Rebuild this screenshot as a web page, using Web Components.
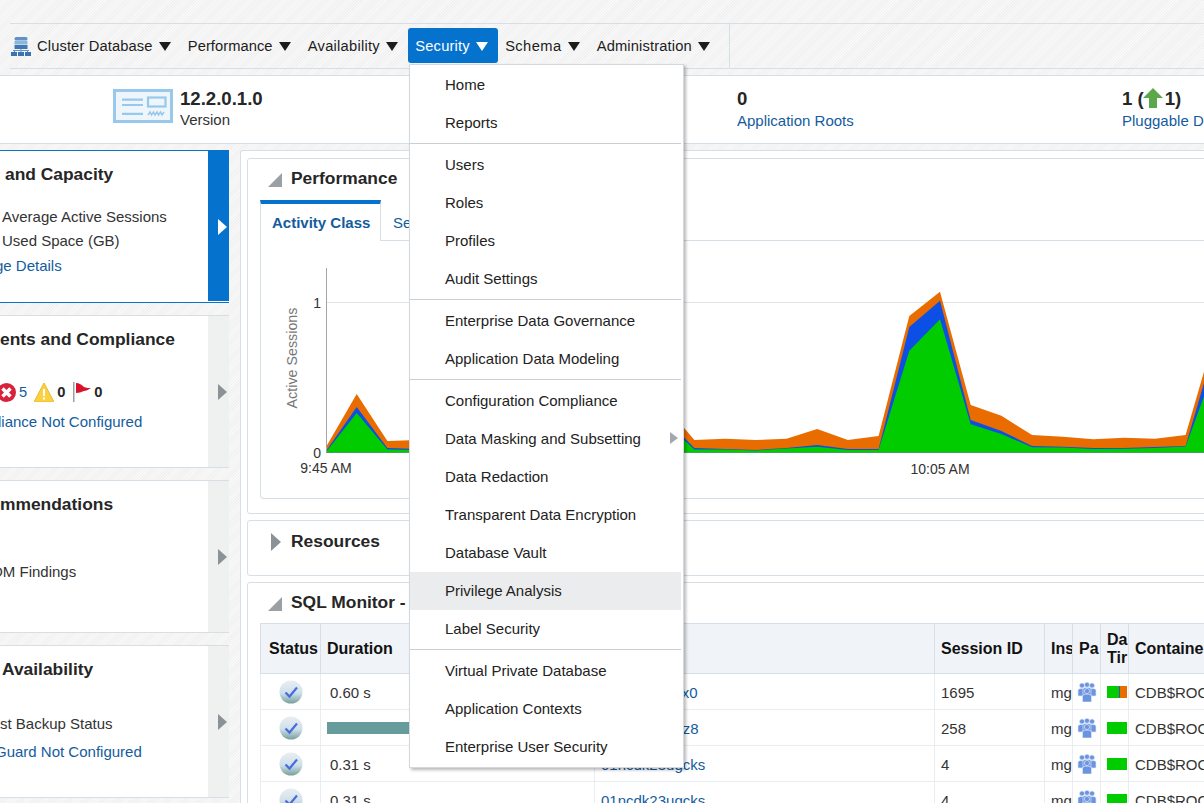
<!DOCTYPE html>
<html>
<head>
<meta charset="utf-8">
<title>Cluster Database</title>
<style>
html, body { margin: 0; height: 803px; overflow: hidden; }
body {
  font: 15px "Liberation Sans", Arial, sans-serif;
  color: #333;
  background: repeating-linear-gradient(135deg, #f8f8f8 0 1px, #f1f1f1 1px 2px);
}
x-app { display: block; }
</style>
</head>
<body>
<x-app>
  <x-navbar>
    <x-nav-item icon spacing=".13">Cluster Database</x-nav-item>
    <x-nav-item spacing=".05">Performance</x-nav-item>
    <x-nav-item spacing=".25">Availability</x-nav-item>
    <x-nav-item active spacing=".2">Security</x-nav-item>
    <x-nav-item spacing=".4">Schema</x-nav-item>
    <x-nav-item spacing=".14">Administration</x-nav-item>
  </x-navbar>

  <x-summary>
    <x-summary-item icon="version" value="12.2.0.1.0" label="Version"></x-summary-item>
    <x-summary-item value="0" label="Application Roots" link></x-summary-item>
    <x-summary-item value="1 (|1)" label="Pluggable Databases" link></x-summary-item>
  </x-summary>

  <x-main>
    <x-side-card slot="side" heading="and Capacity" inset="5" active>
      <x-side-line top="20" at="2">Average Active Sessions</x-side-line>
      <x-side-line at="2">Used Space (GB)</x-side-line>
      <x-side-line top="1" at="-5" link>ge Details</x-side-line>
    </x-side-card>
    <x-side-card slot="side" heading="ents and Compliance" inset="0">
      <x-status-row></x-status-row>
      <x-side-line top="6" at="-2" link>liance Not Configured</x-side-line>
    </x-side-card>
    <x-side-card slot="side" heading="mmendations" inset="0">
      <x-side-line top="45" at="-8">DM Findings</x-side-line>
    </x-side-card>
    <x-side-card slot="side" heading="Availability" inset="2">
      <x-side-line top="32" at="0">st Backup Status</x-side-line>
      <x-side-line top="4" at="-5" link>Guard Not Configured</x-side-line>
    </x-side-card>

    <x-panel heading="Performance" height="356">
      <x-tabs>
        <x-chart></x-chart>
      </x-tabs>
    </x-panel>
    <x-panel heading="Resources" height="56" closed></x-panel>
    <x-panel heading="SQL Monitor -" height="240">
      <x-sql-table></x-sql-table>
    </x-panel>
  </x-main>

  <x-menu groups='[
    ["Home","Reports"],
    ["Users","Roles","Profiles","Audit Settings"],
    ["Enterprise Data Governance","Application Data Modeling"],
    ["Configuration Compliance","Data Masking and Subsetting>","Data Redaction","Transparent Data Encryption","Database Vault","Privilege Analysis*","Label Security"],
    ["Virtual Private Database","Application Contexts","Enterprise User Security"]
  ]'></x-menu>
</x-app>

<script>
const LINE = '#d6dfe6';
const LINK = '#145c9e';

class App extends HTMLElement {
  constructor() {
    super();
    this.attachShadow({ mode: 'open' });
    this.shadowRoot.innerHTML = `
      <style>
      :host { display: block; position: relative; height: 803px; overflow: hidden; padding-top: 23px; box-sizing: border-box; }
      </style>
      <slot></slot>`;
  }
}

class Navbar extends HTMLElement {
  constructor() {
    super();
    this.attachShadow({ mode: 'open' });
    this.shadowRoot.innerHTML = `
      <style>
      :host {
        display: block;
        margin-left: 10px;
        border-top: 1px solid ${LINE};
        border-bottom: 1px solid ${LINE};
      }
      .row { display: flex; align-items: center; height: 44px; padding-left: 1px; }
      .end { width: 9px; height: 100%; border-right: 1px solid ${LINE}; }
      </style>
      <div class="row"><slot></slot><div class="end"></div></div>`;
  }
}

class NavItem extends HTMLElement {
  constructor() {
    super();
    this.attachShadow({ mode: 'open' });
    const active = this.hasAttribute('active');
    const icon = this.hasAttribute('icon') ? `
      <svg width="20" height="20" viewBox="0 0 20 20" style="margin:0 6px 0 -7px;flex:none">
        <rect x="3.5" y="1" width="13" height="3.5" rx="1.5" fill="#5f93c7"/>
        <rect x="3.5" y="5" width="13" height="3.5" fill="#8db6de"/>
        <rect x="3.5" y="9" width="13" height="4" fill="#3f78b5"/>
        <path d="M2 14.5h16M3.5 14.5v1.5M10 13v3M16.500 14.500v1.500" stroke="#5f93c7" fill="none"/>
        <rect x="0" y="16" width="6" height="4.500" fill="#3b73b0"/>
        <rect x="7" y="16" width="6" height="4.500" fill="#3b73b0"/>
        <rect x="14" y="16" width="6" height="4.500" fill="#3b73b0"/>
      </svg>` : '';
    this.shadowRoot.innerHTML = `
      <style>
      :host {
        display: flex;
        align-items: center;
        height: 35px;
        padding: 0 10px 0 7px;
        margin-top: -1px;
        white-space: nowrap;
        font-size: 14.7px;
        letter-spacing: ${this.getAttribute('spacing') || 0}px;
        color: ${active ? '#fff' : '#1c1c1c'};
        background: ${active ? '#0572ce' : 'none'};
        border-radius: 3px;
      }
      .caret {
        width: 0; height: 0;
        margin: 2px 0 0 6.3px;
        border-left: 6px solid transparent;
        border-right: 6px solid transparent;
        border-top: 9px solid currentColor;
      }
      </style>
      ${icon}<slot></slot><span class="caret"></span>`;
  }
}

class Summary extends HTMLElement {
  constructor() {
    super();
    this.attachShadow({ mode: 'open' });
    this.shadowRoot.innerHTML = `
      <style>
      :host {
        display: block;
        margin-top: 6px;
        height: 67px;
        background: #fff;
        border-top: 1px solid ${LINE};
        border-bottom: 1px solid ${LINE};
        overflow: hidden;
      }
      .grid { display: grid; grid-template-columns: 624px 385px 200px; margin-left: 113px; padding-top: 12px; }
      </style>
      <div class="grid"><slot></slot></div>`;
  }
}

class SummaryItem extends HTMLElement {
  constructor() {
    super();
    this.attachShadow({ mode: 'open' });
    const isVersion = this.getAttribute('icon') === 'version';
    const link = this.hasAttribute('link');
    const icon = isVersion ? `
      <svg width="60" height="34" viewBox="0 0 60 34" style="margin:1px 7px 0 0;flex:none">
        <rect x="1.500" y="1.500" width="57" height="31" fill="#eef6fc" stroke="#98c8ec" stroke-width="3"/>
        <path d="M9 10.700h21M9 16h21M9 24.800h21" stroke="#98c8ec" stroke-width="2.200"/>
        <rect x="35" y="8.500" width="17.500" height="9" fill="none" stroke="#98c8ec" stroke-width="2.200"/>
        <path d="M35 26l2-3 1.500 3 2-3 1.500 3 2-3 1.500 3 2-3 1.500 3 2-3" fill="none" stroke="#98c8ec" stroke-width="1.500"/>
      </svg>` : '';
    const arrow = `<svg width="20" height="20" viewBox="0 0 20 20" style="vertical-align:-3px;margin:0 2px 0 -1px"><path d="M10 0L20 10H14V20H6V10H0Z" fill="#5ba84a"/></svg>`;
    const value = this.getAttribute('value').replace('|', arrow);
    this.shadowRoot.innerHTML = `
      <style>
      :host { display: flex; align-items: flex-start; white-space: nowrap; min-width: 0; }
      .value { font-weight: bold; font-size: 18.600px; line-height: 21px; color: #262626; display: block; }
      .label { display: block; line-height: 20px; margin-top: ${link ? 2 : 1}px; color: ${link ? LINK : '#333'}; }
      </style>
      ${icon}<div><span class="value">${value}</span><span class="label">${this.getAttribute('label')}</span></div>`;
  }
}

class Main extends HTMLElement {
  constructor() {
    super();
    this.attachShadow({ mode: 'open' });
    this.shadowRoot.innerHTML = `
      <style>
      :host { display: grid; grid-template-columns: 229px 1fr; column-gap: 11px; margin-top: 6px; }
      .side { display: flex; flex-direction: column; gap: 12px; }
      .content {
        background: #fff;
        border: 1px solid ${LINE};
        border-right: 0;
        border-radius: 3px 0 0 0;
        padding: 7px 0 0 6px;
        height: 660px;
        overflow: hidden;
      }
      .content ::slotted(*) { margin-bottom: 6px; }
      </style>
      <div class="side"><slot name="side"></slot></div>
      <div class="content"><slot></slot></div>`;
  }
}

class SideCard extends HTMLElement {
  constructor() {
    super();
    this.attachShadow({ mode: 'open' });
    const active = this.hasAttribute('active');
    const edge = active ? '#0572ce' : LINE;
    this.shadowRoot.innerHTML = `
      <style>
      :host {
        display: grid;
        grid-template-columns: 208px 21px;
        height: 153px;
        box-sizing: border-box;
        background: #fff;
        border-top: 1px solid ${edge};
        border-bottom: 1px solid ${edge};
      }
      .body { overflow: hidden; white-space: nowrap; padding-top: 12px; }
      h2 {
        margin: 0;
        font-size: 17.400px;
        line-height: 22px;
        color: #262626;
        padding-left: ${this.getAttribute('inset')}px;
      }
      .band {
        background: ${active ? '#0572ce' : '#eff1f1'};
        ${active ? 'margin-bottom: 1px;' : ''}
        padding: 68px 0 0 10px;
      }
      .arrow {
        width: 0; height: 0;
        border-top: 8px solid transparent;
        border-bottom: 8px solid transparent;
        border-left: 9px solid ${active ? '#fff' : '#8a9297'};
      }
      </style>
      <div class="body"><h2>${this.getAttribute('heading')}</h2><slot></slot></div>
      <div class="band"><div class="arrow"></div></div>`;
  }
}

class SideLine extends HTMLElement {
  constructor() {
    super();
    this.attachShadow({ mode: 'open' });
    this.shadowRoot.innerHTML = `
      <style>
      :host {
        display: block;
        line-height: 24px;
        margin-top: ${this.getAttribute('top') || 0}px;
        margin-left: ${this.getAttribute('at') || 0}px;
        color: ${this.hasAttribute('link') ? LINK : '#333'};
      }
      </style>
      <slot></slot>`;
  }
}

class StatusRow extends HTMLElement {
  constructor() {
    super();
    this.attachShadow({ mode: 'open' });
    this.shadowRoot.innerHTML = `
      <style>
      :host { display: flex; align-items: center; height: 24px; margin: 30px 0 0 -3px; }
      svg { flex: none; }
      b { color: #262626; font-size: 14.700px; }
      .count { color: ${LINK}; margin: 0 7px 0 3px; font-size: 14.700px; }
      </style>
      <svg width="19" height="19" viewBox="0 0 19 19"><circle cx="9.500" cy="9.500" r="9.500" fill="#d8213a"/><path d="M5.500 5.500l8 8M13.500 5.500l-8 8" stroke="#fff" stroke-width="3.500"/></svg>
      <span class="count">5</span>
      <svg width="20" height="20" viewBox="0 0 20 20" style="margin-right:3px"><path d="M10 1L20 20H0Z" fill="#f9d141" stroke="#e8b92e"/><path d="M10 7v7M10 15.500v2" stroke="#fff" stroke-width="2"/></svg>
      <b>0</b>
      <svg width="20" height="20" viewBox="0 0 20 20" style="margin:0 1px 0 8px"><rect x="0" y="0" width="1.500" height="20" fill="#9aa0a6"/><path d="M3 1C6 1 9 3 11 5C13 6 16 6 18 6C15 8 13 9 11 9C8 10 6 11 3 11Z" fill="#d8122a"/></svg>
      <b>0</b>`;
  }
}

class Panel extends HTMLElement {
  constructor() {
    super();
    this.attachShadow({ mode: 'open' });
    const closed = this.hasAttribute('closed');
    const mark = closed
      ? `<svg width="10" height="18" viewBox="0 0 10 18" style="margin-left:23px"><path d="M0 0L10 9L0 18Z" fill="#8a9297"/></svg>`
      : `<svg width="14" height="14" viewBox="0 0 14 14" style="margin-left:20px;margin-top:2px"><path d="M14 0V14H0Z" fill="#9aa0a4"/></svg>`;
    this.shadowRoot.innerHTML = `
      <style>
      :host {
        display: block;
        box-sizing: border-box;
        width: 1100px;
        height: ${this.getAttribute('height')}px;
        border: 1px solid ${LINE};
        border-radius: 3px;
        overflow: hidden;
      }
      header { display: flex; align-items: center; height: ${closed ? 41 : 39}px; }
      h2 { margin: 0 0 0 ${closed ? 10 : 9}px; font-size: 17.400px; color: #262626; white-space: nowrap; }
      .body { padding: 2px 0 0 12px; }
      </style>
      <header>${mark}<h2>${this.getAttribute('heading')}</h2></header>
      <div class="body"><slot></slot></div>`;
  }
}

class Tabs extends HTMLElement {
  constructor() {
    super();
    this.attachShadow({ mode: 'open' });
    this.shadowRoot.innerHTML = `
      <style>
      :host { display: block; }
      .bar { display: flex; height: 41px; box-sizing: border-box; }
      .tab {
        box-sizing: border-box;
        width: 121px;
        padding: 10px 0 0 11px;
        border: 1px solid ${LINE};
        border-top: 4px solid #0572ce;
        border-bottom: 0;
        font-weight: bold;
        color: ${LINK};
      }
      .rest { flex: 1; padding: 14px 0 0 12px; color: ${LINK}; border-bottom: 1px solid ${LINE}; }
      .box {
        height: 257px;
        border: 1px solid ${LINE};
        border-top: 0;
        border-radius: 0 0 0 4px;
        overflow: hidden;
      }
      </style>
      <div class="bar"><div class="tab">Activity Class</div><div class="rest">Services</div></div>
      <div class="box"><slot></slot></div>`;
  }
}

class Chart extends HTMLElement {
  constructor() {
    super();
    this.attachShadow({ mode: 'open' });
    const step = 30.7, x0 = 326, base = 452.5;
    const orange = [447,394,441,440,440,440,440,438,436,434,430,404,440,438.7,440,438.7,429,440,436,316,291.7,405,415.7,435,436.7,439.3,437.7,438.7,435,329.5];
    const blue =   [451,407,448,449,449,449,449,448,447,446,442,417,448,449,450,448,445,449,449,327,300.7,420,431,446,446.7,448,448,447,446,341];
    const green =  [452,413,449.5,450,450,450,450,449,448,447,444,421,449.5,449.5,450.5,448.5,446.7,450,450,350.7,319.3,424.3,434,447.3,447.5,449,448.7,448,446.5,363];
    const area = (tops, fill) => {
      const pts = tops.map((y, i) => `${(x0 + i * step).toFixed(1)},${y}`).join(' ');
      const end = (x0 + (tops.length - 1) * step).toFixed(1);
      return `<polygon points="${x0},${base} ${pts} ${end},${base}" fill="${fill}"/>`;
    };
    this.shadowRoot.innerHTML = `
      <style>
      :host { display: block; }
      svg { display: block; }
      text { font: 14px "Liberation Sans", Arial, sans-serif; fill: #333; }
      </style>
      <svg width="1000" height="257" viewBox="261 241 1000 257">
        <line x1="326" y1="302.500" x2="1261" y2="302.500" stroke="#e1e5ea"/>
        ${area(orange, '#e86c00')}
        ${area(blue, '#0b4fe6')}
        ${area(green, '#00cc00')}
        <line x1="326.500" y1="268" x2="326.500" y2="452.500" stroke="#a5a5a5"/>
        <text x="321" y="308" text-anchor="end">1</text>
        <text x="321" y="458" text-anchor="end">0</text>
        <text x="326" y="473" text-anchor="middle">9:45 AM</text>
        <text x="940" y="474" text-anchor="middle">10:05 AM</text>
        <text transform="translate(297 358) rotate(-90)" text-anchor="middle" style="fill:#777;font-size:14.300px">Active Sessions</text>
      </svg>`;
  }
}

class SqlTable extends HTMLElement {
  constructor() {
    super();
    this.attachShadow({ mode: 'open' });
    const check = `<svg width="24" height="24" viewBox="0 0 24 24">
      <defs><linearGradient id="g" x1="0" y1="0" x2="0" y2="1"><stop offset="0" stop-color="#e9eef2"/><stop offset=".55" stop-color="#cfe0ea"/><stop offset="1" stop-color="#78a09c"/></linearGradient></defs>
      <circle cx="12" cy="12" r="11.500" fill="url(#g)"/><path d="M6.500 12.500l4 4L18 7.500" fill="none" stroke="#4a6be0" stroke-width="2.200"/></svg>`;
    const people = `<svg width="20" height="20" viewBox="0 0 20 20">
      <g fill="#6b94e0" stroke="#dfe8f8" stroke-width=".7">
        <circle cx="5" cy="3.500" r="2.500"/><circle cx="15" cy="3.500" r="2.500"/><circle cx="10" cy="2.800" r="2.500"/>
        <path d="M1 8c0-2 8-2 8 0v6H1z"/><path d="M11 8c0-2 8-2 8 0v6h-8z"/><path d="M6 7c0-2 8-2 8 0v7H6z"/>
        <circle cx="10" cy="9" r="2.600"/><path d="M5.500 14c0-2.500 9-2.500 9 0v6h-9z"/>
      </g></svg>`;
    const time = parts => `<div class="time">${parts.map(([w, c]) => `<i style="width:${w}px;background:${c}"></i>`).join('')}</div>`;
    const green = time([[20, '#00cc00']]);
    const rows = [
      ['<span class="num">0.60 s</span>', '1mfy8u7zpkx0', '1695', time([[12, '#00cc00'], [1, '#4a4aa8'], [7, '#e86c00']])],
      ['<div class="bar"></div>', '1mcv7d3tqoz8', '258', green],
      ['<span class="num">0.31 s</span>', '01ncdk23ugcks', '4', green],
      ['<span class="num">0.31 s</span>', '01ncdk23ugcks', '4', green]
    ];
    this.shadowRoot.innerHTML = `
      <style>
      :host { display: block; }
      table { border-collapse: collapse; table-layout: fixed; width: 959px; margin-top: -1px; }
      th, td { padding: 0 0 0 6px; overflow: hidden; white-space: nowrap; text-align: left; }
      th {
        height: 50px;
        box-sizing: border-box;
        background: #f0f3f7;
        border: 1px solid ${LINE};
        color: #111;
        font-size: 16px;
        line-height: 18px;
      }
      td { height: 36px; box-sizing: border-box; padding-top: 1px; border: 1px solid #eaedf0; color: #333; }
      .link { color: ${LINK}; }
      .c { padding: 0; text-align: center; }
      .num { padding-left: 3px; }
      .bar { height: 12px; background: #669c9c; width: 200px; margin-top: 0; }
      .time { display: flex; height: 12px; margin: -1px 0 0 0; }
      .time i { display: block; }
      .c svg { display: block; margin: auto; }
      </style>
      <table>
        <colgroup><col style="width:60px"><col style="width:274px"><col style="width:340px"><col style="width:110px"><col style="width:28px"><col style="width:28px"><col style="width:28px"><col></colgroup>
        <tr>
          <th style="padding-left:8px">Status</th><th>Duration</th><th>SQL ID</th><th>Session ID</th><th>Ins</th><th>Pa</th><th>Da<br>Tir</th><th>Container</th>
        </tr>
        ${rows.map(r => `<tr>
          <td class="c">${check}</td>
          <td>${r[0]}</td>
          <td class="link">${r[1]}</td>
          <td>${r[2]}</td>
          <td>mg</td>
          <td class="c">${people}</td>
          <td>${r[3]}</td>
          <td>CDB$ROOT</td>
        </tr>`).join('')}
      </table>`;
  }
}

class Menu extends HTMLElement {
  constructor() {
    super();
    this.attachShadow({ mode: 'open' });
  }

  connectedCallback() {
    this.render();
  }

  render() {
    const groups = JSON.parse(this.getAttribute('groups'));
    const item = text => {
      const hover = text.endsWith('*');
      const sub = text.endsWith('>');
      const label = text.replace(/[*>]$/, '');
      return `<div class="item${hover ? ' hover' : ''}">${label}${sub ? '<span class="sub"></span>' : ''}</div>`;
    };
    this.shadowRoot.innerHTML = `
      <style>
      :host {
        display: block;
        position: absolute;
        left: 409px;
        top: 64px;
        width: 275px;
        box-sizing: border-box;
        padding: 1px 2px 1px 0;
        background: #fff;
        border: 1px solid #d2d8de;
        box-shadow: 2px 2px 3px rgba(0,0,0,.28);
        color: #222;
      }
      .item { position: relative; height: 38px; line-height: 38px; padding-left: 35px; white-space: nowrap; }
      .hover { background: #ebeced; }
      .sep { height: 3px; box-sizing: border-box; border-top: 1px solid #c8d0d6; margin-top: 1px; }
      .sub {
        position: absolute;
        right: 3px;
        top: 12px;
        border-top: 6px solid transparent;
        border-bottom: 6px solid transparent;
        border-left: 8px solid #a2a8ad;
      }
      </style>
      ${groups.map(g => g.map(item).join('')).join('<div class="sep"></div>')}`;
  }
}

customElements.define('x-app', App);
customElements.define('x-navbar', Navbar);
customElements.define('x-nav-item', NavItem);
customElements.define('x-summary', Summary);
customElements.define('x-summary-item', SummaryItem);
customElements.define('x-main', Main);
customElements.define('x-side-card', SideCard);
customElements.define('x-side-line', SideLine);
customElements.define('x-status-row', StatusRow);
customElements.define('x-panel', Panel);
customElements.define('x-tabs', Tabs);
customElements.define('x-chart', Chart);
customElements.define('x-sql-table', SqlTable);
customElements.define('x-menu', Menu);
</script>
</body>
</html>
